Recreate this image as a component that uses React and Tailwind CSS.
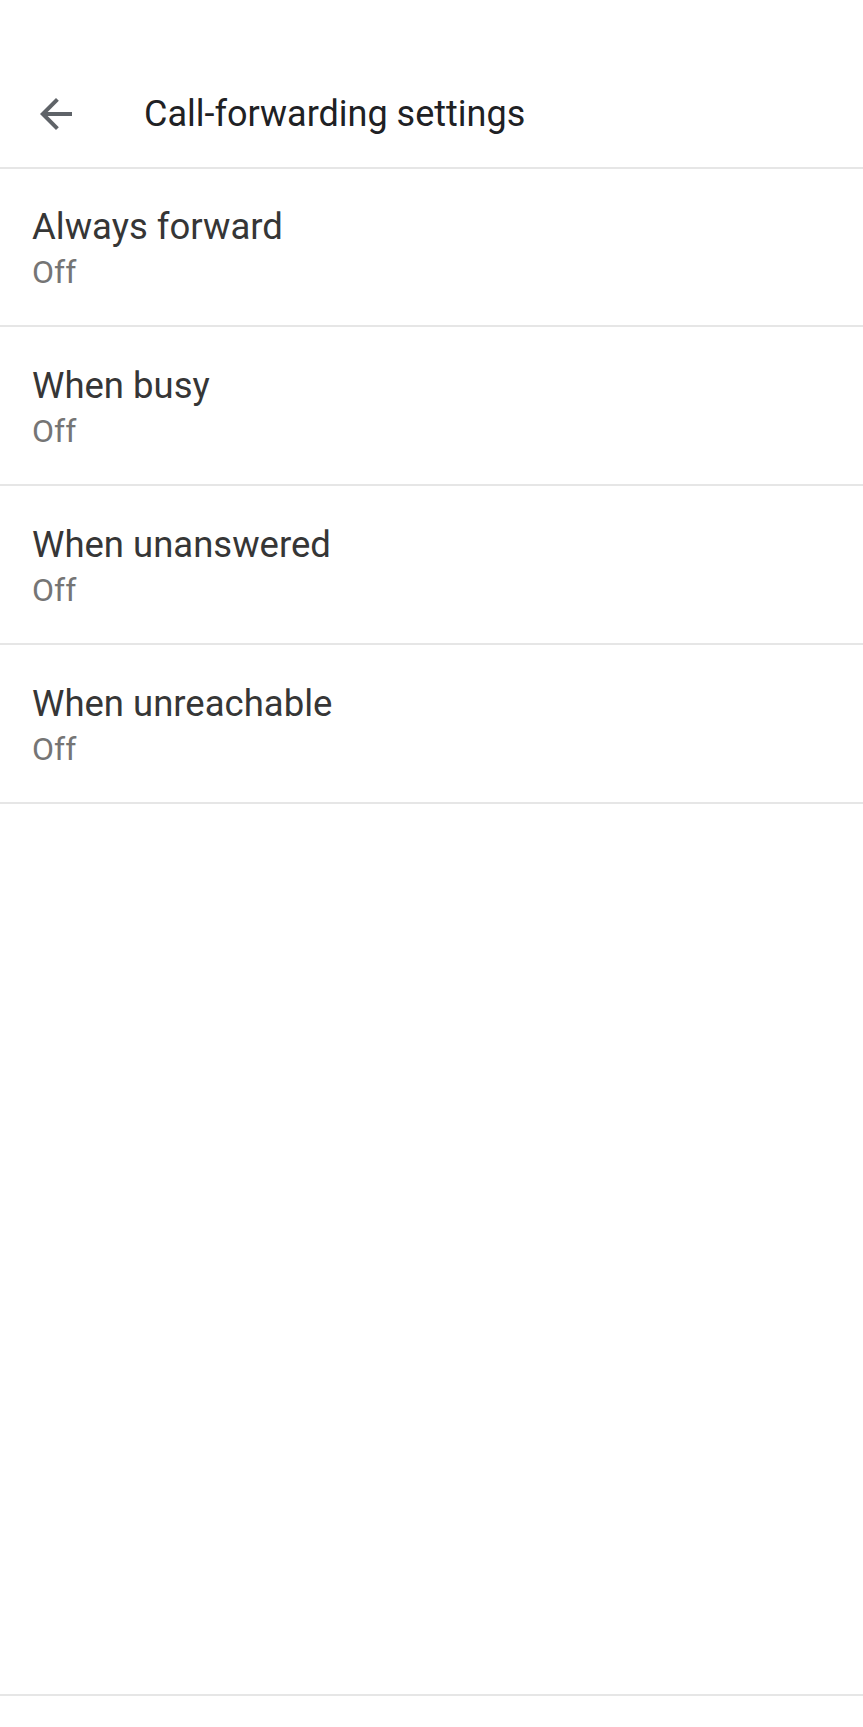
import React from "react";

const items = [
  { title: "Always forward", status: "Off" },
  { title: "When busy", status: "Off" },
  { title: "When unanswered", status: "Off" },
  { title: "When unreachable", status: "Off" },
];

export default function App() {
  return (
    <div
      className="min-h-[1727px] w-full bg-white flex flex-col"
      style={{ fontFamily: "Roboto, 'Noto Sans', sans-serif" }}
    >
      {/* Toolbar */}
      <header className="h-[169px] pt-[60px] border-b-2 border-[#e6e6e6] flex items-center">
        <button className="ml-[32px] w-[48px] h-[48px] flex items-center justify-center text-[#5f6368]">
          <svg viewBox="0 0 24 24" width="48" height="48" fill="currentColor">
            <path d="M20 11H7.83l5.59-5.59L12 4l-8 8 8 8 1.41-1.41L7.83 13H20v-2z" />
          </svg>
        </button>
        <h1 className="ml-[64px] text-[36px] leading-[44px] text-[#202124] font-normal">
          Call-forwarding settings
        </h1>
      </header>

      {/* Options */}
      <div>
        {items.map((item, i) => (
          <div
            key={item.title}
            className={`${i === 0 ? "h-[158px] pt-[36px]" : "h-[159px] pt-[37px]"} border-b-2 border-[#e6e6e6] pl-[32px]`}
          >
            <p className="text-[36.5px] leading-[44px] text-[#363636]">{item.title}</p>
            <p className="mt-[4px] text-[32px] leading-[38px] text-[#757575]">{item.status}</p>
          </div>
        ))}
      </div>

      <div className="flex-1" />
      <div className="h-[33px] border-t-2 border-[#e6e6e6]" />
    </div>
  );
}
